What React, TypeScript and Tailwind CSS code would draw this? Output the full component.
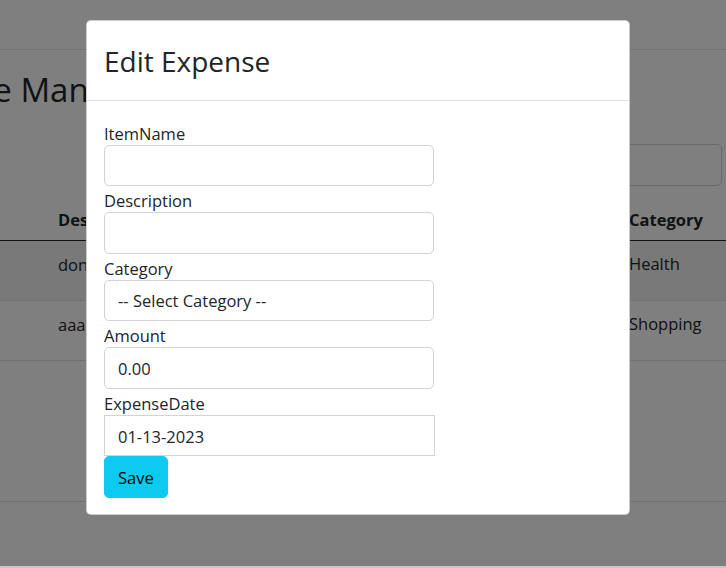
import React from "react";

const rows = [
  { desc: "done", category: "Health", striped: true },
  { desc: "aaaa", category: "Shopping", striped: false },
];

const labelCls = "block h-[26px] pt-[4px] leading-[22px] text-[16.5px]";

const Field = ({ label, value, wide }: { label: string; value: string; wide?: boolean }) => (
  <div>
    <label className={labelCls}>{label}</label>
    <input
      readOnly
      value={value}
      className={
        wide
          ? "block h-[41.5px] w-[331px] border border-[#ced4da] bg-white px-[13px] pt-[2px] text-[16.5px] text-[#212529] outline-none"
          : "block h-[41.5px] w-[330px] rounded-[5px] border border-[#ced4da] bg-white px-[13px] pt-[2px] text-[16.5px] text-[#212529] outline-none"
      }
    />
  </div>
);

const App = () => {
  return (
    <div className="relative h-[568px] w-[726px] overflow-hidden bg-white font-['Open_Sans',sans-serif] text-[#212529]">
      {/* page behind the modal */}
      <nav className="h-[50px] border-b border-[#dee2e6]" />
      <h1 className="-ml-[117px] mt-[20px] whitespace-nowrap text-[33px] leading-[40px] font-normal">
        Expense Manager
      </h1>
      <div className="mt-[34px] flex justify-end pr-[4px]">
        <input
          readOnly
          className="h-[41.8px] w-[330px] rounded-[5px] border border-[#ced4da] outline-none"
        />
      </div>
      <div className="mt-[10px] text-[16.5px]">
        <div className="grid h-[45px] grid-cols-[49px_1fr_106px] border-b border-[#212529] font-bold">
          <div />
          <div className="px-[9px] pt-[11px] leading-[26.4px]">Description</div>
          <div className="px-[9px] pt-[11px] leading-[26.4px]">Category</div>
        </div>
        {rows.map((row, i) => (
          <div
            key={i}
            className={
              row.striped
                ? "grid h-[60px] grid-cols-[49px_1fr_106px] border-b border-[#dee2e6] bg-[#f2f2f2]"
                : "grid h-[60px] grid-cols-[49px_1fr_106px] border-b border-[#dee2e6]"
            }
          >
            <div />
            <div className="px-[9px] pt-[11px] leading-[26.4px]">{row.desc}</div>
            <div className="px-[9px] pt-[10.5px] leading-[26.4px]">{row.category}</div>
          </div>
        ))}
      </div>
      <footer className="mt-[140px] border-t border-[#dee2e6]" />

      {/* backdrop */}
      <div className="absolute inset-0 bg-black/50" />

      {/* modal */}
      <div className="absolute left-[86px] top-[20px] flex h-[495px] w-[544px] flex-col rounded-[5px] border border-black/20 bg-white">
        <div className="flex h-[80px] items-center border-b border-[#dee2e6] px-[17px]">
          <h2 className="text-[28px] leading-[34px] font-normal">Edit Expense</h2>
        </div>
        <div className="px-[17px] pt-[17.6px]">
          <Field label="ItemName" value="" />
          <Field label="Description" value="" />
          <div>
            <label className={labelCls}>Category</label>
            <select className="block h-[41.5px] w-[330px] appearance-none rounded-[5px] border border-[#ced4da] bg-white px-[13px] pt-[3px] text-[16.5px] text-[#212529] outline-none">
              <option>-- Select Category --</option>
            </select>
          </div>
          <Field label="Amount" value="0.00" />
          <Field label="ExpenseDate" value="01-13-2023" wide />
          <button className="h-[41.5px] rounded-[5px] border border-[#0dcaf0] bg-[#0dcaf0] px-[13px] pt-[3px] text-[16.5px] text-black">
            Save
          </button>
        </div>
      </div>

      {/* window scrollbar edge */}
      <div className="absolute bottom-0 left-0 h-[2px] w-full bg-[#c8c8cc]" />
    </div>
  );
};

export default App;
